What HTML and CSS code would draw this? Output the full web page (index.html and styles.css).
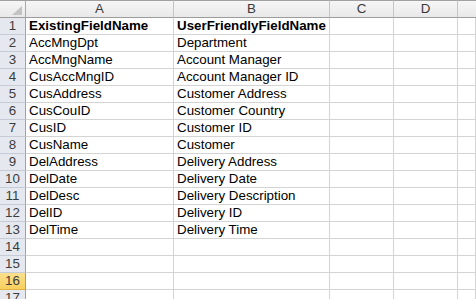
FILE: index.html
```html
<!DOCTYPE html>
<html>
<head>
<meta charset="utf-8">
<link rel="stylesheet" href="styles.css">
</head>
<body>
<div class="sheet">
  <div class="corner"><svg class="tri" width="10" height="9" viewBox="0 0 10 9"><polygon points="10,0 10,9 0,9" fill="#c3c3c3"/></svg></div>
  <div class="colhead">A</div>
  <div class="colhead">B</div>
  <div class="colhead">C</div>
  <div class="colhead">D</div>
  <div class="colhead last"></div>

  <div class="rowhead">1</div><div class="cell bold">ExistingFieldName</div><div class="cell bold">UserFriendlyFieldName</div><div class="cell"></div><div class="cell"></div><div class="cell"></div>
  <div class="rowhead">2</div><div class="cell">AccMngDpt</div><div class="cell">Department</div><div class="cell"></div><div class="cell"></div><div class="cell"></div>
  <div class="rowhead">3</div><div class="cell">AccMngName</div><div class="cell">Account Manager</div><div class="cell"></div><div class="cell"></div><div class="cell"></div>
  <div class="rowhead">4</div><div class="cell">CusAccMngID</div><div class="cell">Account Manager ID</div><div class="cell"></div><div class="cell"></div><div class="cell"></div>
  <div class="rowhead">5</div><div class="cell">CusAddress</div><div class="cell">Customer Address</div><div class="cell"></div><div class="cell"></div><div class="cell"></div>
  <div class="rowhead">6</div><div class="cell">CusCouID</div><div class="cell">Customer Country</div><div class="cell"></div><div class="cell"></div><div class="cell"></div>
  <div class="rowhead">7</div><div class="cell">CusID</div><div class="cell">Customer ID</div><div class="cell"></div><div class="cell"></div><div class="cell"></div>
  <div class="rowhead">8</div><div class="cell">CusName</div><div class="cell">Customer</div><div class="cell"></div><div class="cell"></div><div class="cell"></div>
  <div class="rowhead">9</div><div class="cell">DelAddress</div><div class="cell">Delivery Address</div><div class="cell"></div><div class="cell"></div><div class="cell"></div>
  <div class="rowhead">10</div><div class="cell">DelDate</div><div class="cell">Delivery Date</div><div class="cell"></div><div class="cell"></div><div class="cell"></div>
  <div class="rowhead">11</div><div class="cell">DelDesc</div><div class="cell">Delivery Description</div><div class="cell"></div><div class="cell"></div><div class="cell"></div>
  <div class="rowhead">12</div><div class="cell">DelID</div><div class="cell">Delivery ID</div><div class="cell"></div><div class="cell"></div><div class="cell"></div>
  <div class="rowhead">13</div><div class="cell">DelTime</div><div class="cell">Delivery Time</div><div class="cell"></div><div class="cell"></div><div class="cell"></div>
  <div class="rowhead">14</div><div class="cell"></div><div class="cell"></div><div class="cell"></div><div class="cell"></div><div class="cell"></div>
  <div class="rowhead">15</div><div class="cell"></div><div class="cell"></div><div class="cell"></div><div class="cell"></div><div class="cell"></div>
  <div class="rowhead active">16</div><div class="cell"></div><div class="cell"></div><div class="cell"></div><div class="cell"></div><div class="cell"></div>
  <div class="rowhead">17</div><div class="cell"></div><div class="cell"></div><div class="cell"></div><div class="cell"></div><div class="cell"></div>
</div>
</body>
</html>
```

FILE: styles.css
```css
html, body {
  margin: 0;
  padding: 0;
  background: #ffffff;
  overflow: hidden;
}
.sheet {
  display: grid;
  grid-template-columns: 26px 148px 156px 64px 64px 1fr;
  grid-auto-rows: 17px;
  grid-template-rows: 18px;
  width: 476px;
  height: 299px;
  overflow: hidden;
  font-family: "Liberation Sans", Arial, sans-serif;
  font-size: 13.33px;
  color: #000;
}
.sheet > div {
  box-sizing: border-box;
  white-space: nowrap;
  overflow: hidden;
}
.corner, .colhead {
  border-top: 1px solid #a0a0a0;
  border-bottom: 1px solid #9c9c9c;
  border-right: 1px solid #c4c4c4;
  background: linear-gradient(#f6f6f6, #e9e9e9);
}
.corner {
  position: relative;
  border-right: 1px solid #a8a8a8;
}
.tri {
  position: absolute;
  right: 3px;
  bottom: 2px;
}
.colhead {
  text-align: center;
  line-height: 16px;
  color: #3a3a3a;
  font-size: 13.33px;
}
.colhead.last {
  border-right: none;
}
.rowhead {
  background: #e5e9ef;
  border-right: 1px solid #9ea3aa;
  border-bottom: 1px solid #c6ccd5;
  text-align: center;
  line-height: 16px;
  color: #3c3c3c;
  font-size: 13.33px;
}
.rowhead.active {
  background: linear-gradient(#fbe08e, #f7cf5c);
  border-bottom: 1px solid #e2b243;
  border-right: 1px solid #c99a2e;
  color: #3c3c3c;
}
.cell {
  border-right: 1px solid #d4d4d4;
  border-bottom: 1px solid #d4d4d4;
  line-height: 16px;
  padding-left: 3px;
}
.cell.bold {
  font-weight: bold;
}
```
